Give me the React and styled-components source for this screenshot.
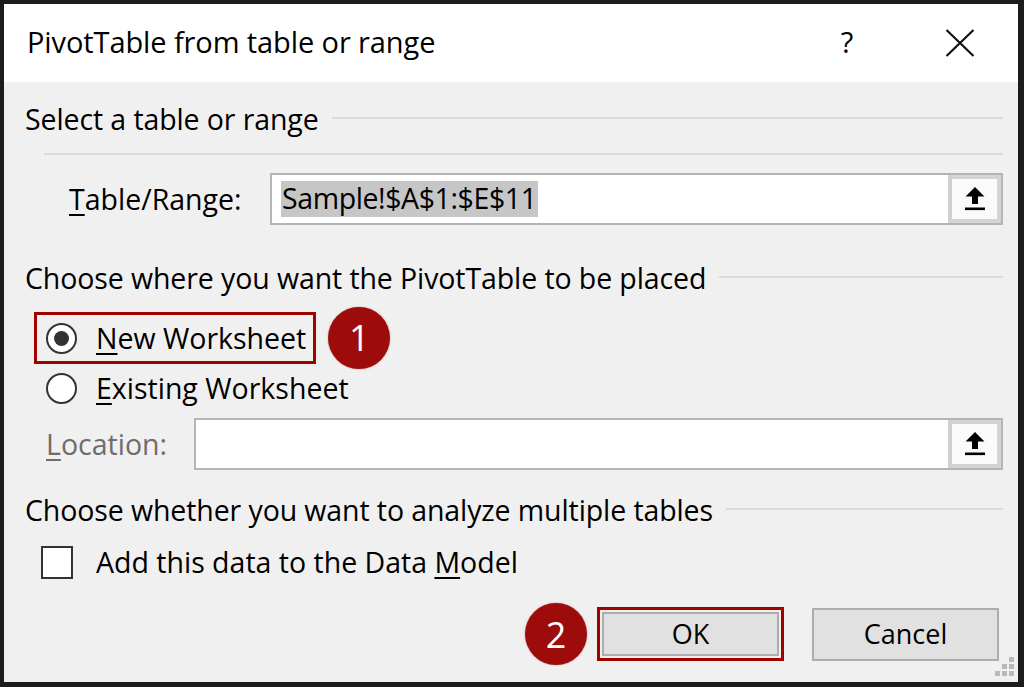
import React from 'react'
import styled, { createGlobalStyle } from 'styled-components'

const GlobalStyle = createGlobalStyle`
    html, body {
        margin: 0;
        padding: 0;
        background: #1b1b1b;
    }
    * {
        box-sizing: border-box;
    }
`

const Frame = styled.div`
    width: 1024px;
    height: 687px;
    border-style: solid;
    border-color: #1c1c1c;
    border-width: 4px 6px 5px 4px;
    background: #f0f0f0;
    font-family: "Open Sans", "Noto Sans", "Liberation Sans", sans-serif;
    color: #000;
    line-height: 1.2;
`

const Dialog = styled.div`
    position: relative;
    height: 100%;
    display: flex;
    flex-direction: column;
    background: #f0f0f0;
`

const TitleBar = styled.div`
    height: 78px;
    background: #fff;
    display: flex;
    align-items: center;
    padding-left: 23px;
`

const Title = styled.div`
    flex: 1;
    font-size: 29px;
    letter-spacing: -0.1px;
    padding-bottom: 2px;
`

const Help = styled.div`
    width: 40px;
    text-align: center;
    font-size: 29px;
    margin-right: 78px;
    padding-bottom: 2px;
`

const CloseButton = styled.div`
    width: 30px;
    height: 30px;
    margin-right: 43px;
    display: flex;
    align-items: center;
    justify-content: center;
`

const Body = styled.div`
    flex: 1;
    display: flex;
    flex-direction: column;
    padding: 0 15px 0 21px;
    font-size: 28.5px;
`

const SectionHeader = styled.div`
    display: flex;
    align-items: center;
    height: 36px;
    margin-top: ${p => p.$top}px;
    white-space: nowrap;
    letter-spacing: -0.1px;
`

const HeaderLine = styled.div`
    flex: 1;
    height: 2px;
    background: #dadada;
    margin-left: 13px;
    margin-top: -2px;
`

const GroupLine = styled.div`
    height: 2px;
    background: #dadada;
    margin: 16px 0 0 19px;
`

const FieldRow = styled.div`
    display: flex;
    align-items: center;
    height: 52px;
    margin-top: ${p => p.$top}px;
`

const FieldLabel = styled.div`
    width: ${p => p.$width}px;
    margin-left: ${p => p.$indent}px;
    color: ${p => (p.$disabled ? '#6d6d6d' : '#000')};
    white-space: nowrap;
`

const Key = styled.span`
    text-decoration: underline;
    text-decoration-thickness: 2px;
    text-underline-offset: 4px;
`

const FieldBox = styled.div`
    flex: 1;
    height: 52px;
    display: flex;
    align-items: center;
    border: 2px solid #b4b4b4;
    background: #fff;
`

const FieldText = styled.div`
    flex: 1;
    display: flex;
    align-items: center;
    padding-left: 9px;
`

const Selected = styled.span`
    background: #c6c6c6;
    padding: 0 1px 1px 1px;
    letter-spacing: -0.4px;
`

const PickButton = styled.div`
    width: 53px;
    height: 48px;
    background: #fafafa;
    border: 4px solid #d4d4d4;
    border-left: 4px solid #cfcfcf;
    display: flex;
    align-items: center;
    justify-content: center;
`

const OptionRow = styled.div`
    display: flex;
    align-items: center;
    margin-top: ${p => p.$top || 0}px;
`

const Marked = styled.div`
    display: flex;
    align-items: center;
    height: ${p => p.$height}px;
    margin-left: 9px;
    padding: 0 7px 0 9px;
    border: 3px solid ${p => (p.$marked ? '#a30000' : 'transparent')};
`

const Radio = styled.div`
    width: 31px;
    height: 31px;
    border-radius: 50%;
    border: 2px solid #333;
    background: #fff;
    display: flex;
    align-items: center;
    justify-content: center;
    margin-right: 19px;
    &::after {
        content: '';
        width: 15px;
        height: 15px;
        border-radius: 50%;
        background: #333;
        display: ${p => (p.$checked ? 'block' : 'none')};
    }
`

const Checkbox = styled.div`
    width: 32px;
    height: 33px;
    border: 2px solid #333;
    background: #fff;
    margin: 0 23px 0 16px;
`

const OptionText = styled.div`
    white-space: nowrap;
`

const Badge = styled.div`
    width: 62px;
    height: 62px;
    flex: none;
    border-radius: 50%;
    background: #9e0b0b;
    color: #fff;
    font-size: 36px;
    display: flex;
    align-items: center;
    justify-content: center;
    margin: ${p => p.$vertical || '0'} ${p => p.$right || 0}px ${p => p.$vertical || '0'} ${p => p.$left}px;
    box-shadow: 0 0 2px rgba(120, 0, 0, 0.4);
`

const ButtonRow = styled.div`
    display: flex;
    align-items: center;
    justify-content: flex-end;
    margin-top: 24px;
    padding-right: 4px;
`

const Highlight = styled.div`
    border: 3px solid ${p => (p.$marked ? '#a30000' : 'transparent')};
    padding: 2px;
    margin-right: ${p => p.$right || 0}px;
`

const Button = styled.div`
    width: ${p => (p.$inner ? 177 : 187)}px;
    height: ${p => (p.$inner ? 44 : 53)}px;
    border: 2px solid #adadad;
    background: #e1e1e1;
    display: flex;
    align-items: center;
    justify-content: center;
    font-size: 27px;
`

const Grip = styled.div`
    position: absolute;
    right: 4px;
    bottom: 6px;
    display: grid;
    grid-template-columns: repeat(3, 5px);
    grid-template-rows: repeat(3, 5px);
    gap: 2px;
`

const GripDot = styled.div`
    background: #b9b9b9;
    grid-column: ${p => p.$col};
    grid-row: ${p => p.$row};
`

const UploadIcon = () => (
    <svg width="22" height="26" viewBox="0 0 22 26">
        <path d="M11 1 L20.5 10.5 L14 10.5 L14 18 L8 18 L8 10.5 L1.5 10.5 Z" fill="#000" />
        <rect x="1" y="21.5" width="20" height="2.6" fill="#000" />
    </svg>
)

const CloseIcon = () => (
    <svg width="30" height="28" viewBox="0 0 30 28">
        <path d="M1.5 1 L28.5 27 M28.5 1 L1.5 27" stroke="#111" strokeWidth="2.2" />
    </svg>
)

const gripDots = [
    [3, 1],
    [2, 2], [3, 2],
    [1, 3], [2, 3], [3, 3],
]

export default function App() {
    return (
        <Frame>
            <GlobalStyle />
            <Dialog>
                <TitleBar>
                    <Title>PivotTable from table or range</Title>
                    <Help>?</Help>
                    <CloseButton><CloseIcon /></CloseButton>
                </TitleBar>
                <Body>
                    <SectionHeader $top={19}>
                        Select a table or range
                        <HeaderLine />
                    </SectionHeader>
                    <GroupLine />
                    <FieldRow $top={18}>
                        <FieldLabel $indent={44} $width={201}>
                            <Key>T</Key>able/Range:
                        </FieldLabel>
                        <FieldBox>
                            <FieldText>
                                <Selected>Sample!$A$1:$E$11</Selected>
                            </FieldText>
                            <PickButton><UploadIcon /></PickButton>
                        </FieldBox>
                    </FieldRow>

                    <SectionHeader $top={35}>
                        Choose where you want the PivotTable to be placed
                        <HeaderLine />
                    </SectionHeader>
                    <OptionRow $top={16}>
                        <Marked $marked $height={52}>
                            <Radio $checked />
                            <OptionText><Key>N</Key>ew Worksheet</OptionText>
                        </Marked>
                        <Badge $left={12} $vertical="-7px">1</Badge>
                    </OptionRow>
                    <OptionRow>
                        <Marked $height={48}>
                            <Radio />
                            <OptionText><Key>E</Key>xisting Worksheet</OptionText>
                        </Marked>
                    </OptionRow>
                    <FieldRow $top={6}>
                        <FieldLabel $indent={21} $width={148} $disabled>
                            <Key>L</Key>ocation:
                        </FieldLabel>
                        <FieldBox>
                            <FieldText />
                            <PickButton><UploadIcon /></PickButton>
                        </FieldBox>
                    </FieldRow>

                    <SectionHeader $top={22}>
                        Choose whether you want to analyze multiple tables
                        <HeaderLine />
                    </SectionHeader>
                    <OptionRow $top={17}>
                        <Checkbox />
                        <OptionText>Add this data to the Data <Key>M</Key>odel</OptionText>
                    </OptionRow>

                    <ButtonRow>
                        <Badge $left={0} $right={10}>2</Badge>
                        <Highlight $marked $right={28}>
                            <Button $inner>OK</Button>
                        </Highlight>
                        <Button>Cancel</Button>
                    </ButtonRow>
                </Body>
                <Grip>
                    {gripDots.map(([col, row]) => (
                        <GripDot key={`${col}-${row}`} $col={col} $row={row} />
                    ))}
                </Grip>
            </Dialog>
        </Frame>
    )
}
